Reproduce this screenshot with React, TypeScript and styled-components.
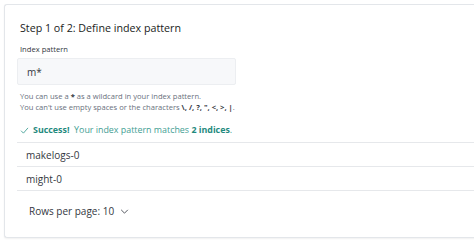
import React from 'react';
import styled, { createGlobalStyle } from 'styled-components';

const GlobalStyle = createGlobalStyle`
  * { box-sizing: border-box; }
  body {
    margin: 0;
    background: #ffffff;
    font-family: "Open Sans", "Liberation Sans", sans-serif;
    color: #343741;
  }
`;

const Page = styled.div`
  width: 474px;
  height: 242px;
  padding: 4px 0 0 4px;
  overflow: hidden;
`;

const Panel = styled.div`
  width: 490px;
  height: 234px;
  border: 1px solid #e3e6ea;
  border-right: none;
  border-radius: 3px 0 0 3px;
  box-shadow: 0 1px 2px rgba(0, 0, 0, 0.06);
  background: #fff;
  padding: 13px 0 0 15px;
`;

const Title = styled.h2`
  margin: 0;
  font-size: 10.7px;
  font-weight: 400;
  line-height: 20px;
  color: #1a1c21;
`;

const Label = styled.label`
  display: block;
  margin-top: 5px;
  font-size: 7.6px;
  line-height: 12px;
  color: #343741;
`;

const Input = styled.div`
  margin: 3px 0 0 -3px;
  width: 219px;
  height: 27px;
  padding: 0 9px;
  display: flex;
  align-items: center;
  background: #f7f8fa;
  border: 1px solid #eceef1;
  border-radius: 2px;
  font-size: 10px;
  color: #343741;
`;

const Help = styled.p`
  margin: 6px 0 0;
  font-size: 7.6px;
  line-height: 11px;
  color: #69707d;

  b {
    color: #343741;
  }
`;

const Success = styled.div`
  margin-top: 10px;
  display: flex;
  align-items: center;
  gap: 4px;
  font-size: 8.9px;
  line-height: 14px;
  color: #3f9e93;

  strong {
    font-weight: 700;
    color: #1f8a7e;
  }
`;

const Table = styled.div`
  margin: 5px 0 0 -3px;
  border-top: 1px solid #e6e8eb;
`;

const Row = styled.div`
  height: 24px;
  padding-left: 9px;
  display: flex;
  align-items: center;
  border-bottom: 1px solid #e6e8eb;
  font-size: 10px;
  color: #343741;
`;

const Pager = styled.div`
  margin-top: 13px;
  padding-left: 9px;
  display: flex;
  align-items: center;
  gap: 6px;
  font-size: 10px;
  line-height: 14px;
  color: #343741;
`;

const Check = () => (
  <svg width="9" height="7" viewBox="0 0 10 8" fill="none">
    <path d="M1 4.2 L3.8 7 L9 1" stroke="#3f9e93" strokeWidth="1" />
  </svg>
);

const Chevron = () => (
  <svg width="9" height="5" viewBox="0 0 10 6" fill="none">
    <path d="M1 1 L5 5 L9 1" stroke="#343741" strokeWidth="1" />
  </svg>
);

const App: React.FC = () => {
  return (
    <>
      <GlobalStyle />
      <Page>
        <Panel>
          <Title>Step 1 of 2: Define index pattern</Title>
          <Label>Index pattern</Label>
          <Input>m*</Input>
          <Help>
            You can use a <b>*</b> as a wildcard in your index pattern.
            <br />
            You can't use empty spaces or the characters <b>\, /, ?, ", &lt;, &gt;, |</b>.
          </Help>
          <Success>
            <Check />
            <span>
              <strong>Success!</strong>&nbsp; Your index pattern matches <strong>2 indices</strong>.
            </span>
          </Success>
          <Table>
            <Row>makelogs-0</Row>
            <Row>might-0</Row>
          </Table>
          <Pager>
            Rows per page: 10 <Chevron />
          </Pager>
        </Panel>
      </Page>
    </>
  );
};

export default App;
